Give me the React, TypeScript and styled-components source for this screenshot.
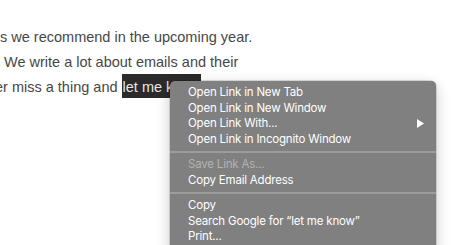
import React from "react";
import styled, { createGlobalStyle } from "styled-components";

const GlobalStyle = createGlobalStyle`
  html, body {
    margin: 0;
    padding: 0;
    background: #ffffff;
  }
  body {
    width: 453px;
    height: 245px;
    overflow: hidden;
    font-family: "Liberation Sans", Arial, sans-serif;
  }
`;

const Page = styled.div`
  position: relative;
  width: 453px;
  height: 245px;
  overflow: hidden;
  background: #ffffff;
`;

const Article = styled.div`
  display: flex;
  flex-direction: column;
  padding-top: 25px;
  font-size: 14.5px;
  line-height: 25px;
  color: #474747;
`;

const Line = styled.div<{ $indent?: number }>`
  white-space: nowrap;
  margin-left: ${(p) => p.$indent ?? 0}px;
`;

const Selected = styled.span`
  background: #2b2b2b;
  color: #e6e6e6;
  padding: 5px 1px 3px 1px;
`;

const Menu = styled.div`
  position: absolute;
  left: 170px;
  top: 81px;
  width: 266px;
  height: 200px;
  padding-top: 3.5px;
  box-sizing: border-box;
  background: #808080;
  border-radius: 5px;
  box-shadow: 0 0 0 0.5px rgba(0, 0, 0, 0.25), 0 4px 14px rgba(0, 0, 0, 0.22);
  font-family: Inter, "Liberation Sans", Arial, sans-serif;
  font-size: 11.5px;
  letter-spacing: -0.2px;
  color: #ffffff;
`;

const Item = styled.div<{ $disabled?: boolean }>`
  display: flex;
  align-items: center;
  justify-content: space-between;
  height: 15.5px;
  padding: 0 12px 0 18px;
  color: ${(p) => (p.$disabled ? "#b3b3b3" : "#ffffff")};
  white-space: nowrap;
`;

const Separator = styled.div`
  height: 10px;
  display: flex;
  align-items: center;
  &::after {
    content: "";
    flex: 1;
    height: 2px;
    background: #9c9c9c;
  }
`;

const Arrow = () => (
  <svg width="7" height="9" viewBox="0 0 7 9">
    <path d="M0 0 L7 4.5 L0 9 Z" fill="#ffffff" />
  </svg>
);

export default function App() {
  return (
    <Page>
      <GlobalStyle />
      <Article>
        <Line>s we recommend in the upcoming year.</Line>
        <Line $indent={4}>We write a lot about emails and their</Line>
        <Line $indent={-5}>
          er miss a thing and <Selected>let me know</Selected>
        </Line>
      </Article>
      <Menu>
        <Item>Open Link in New Tab</Item>
        <Item>Open Link in New Window</Item>
        <Item>
          Open Link With...
          <Arrow />
        </Item>
        <Item>Open Link in Incognito Window</Item>
        <Separator />
        <Item $disabled>Save Link As...</Item>
        <Item>Copy Email Address</Item>
        <Separator />
        <Item>Copy</Item>
        <Item>Search Google for “let me know”</Item>
        <Item>Print...</Item>
      </Menu>
    </Page>
  );
}
